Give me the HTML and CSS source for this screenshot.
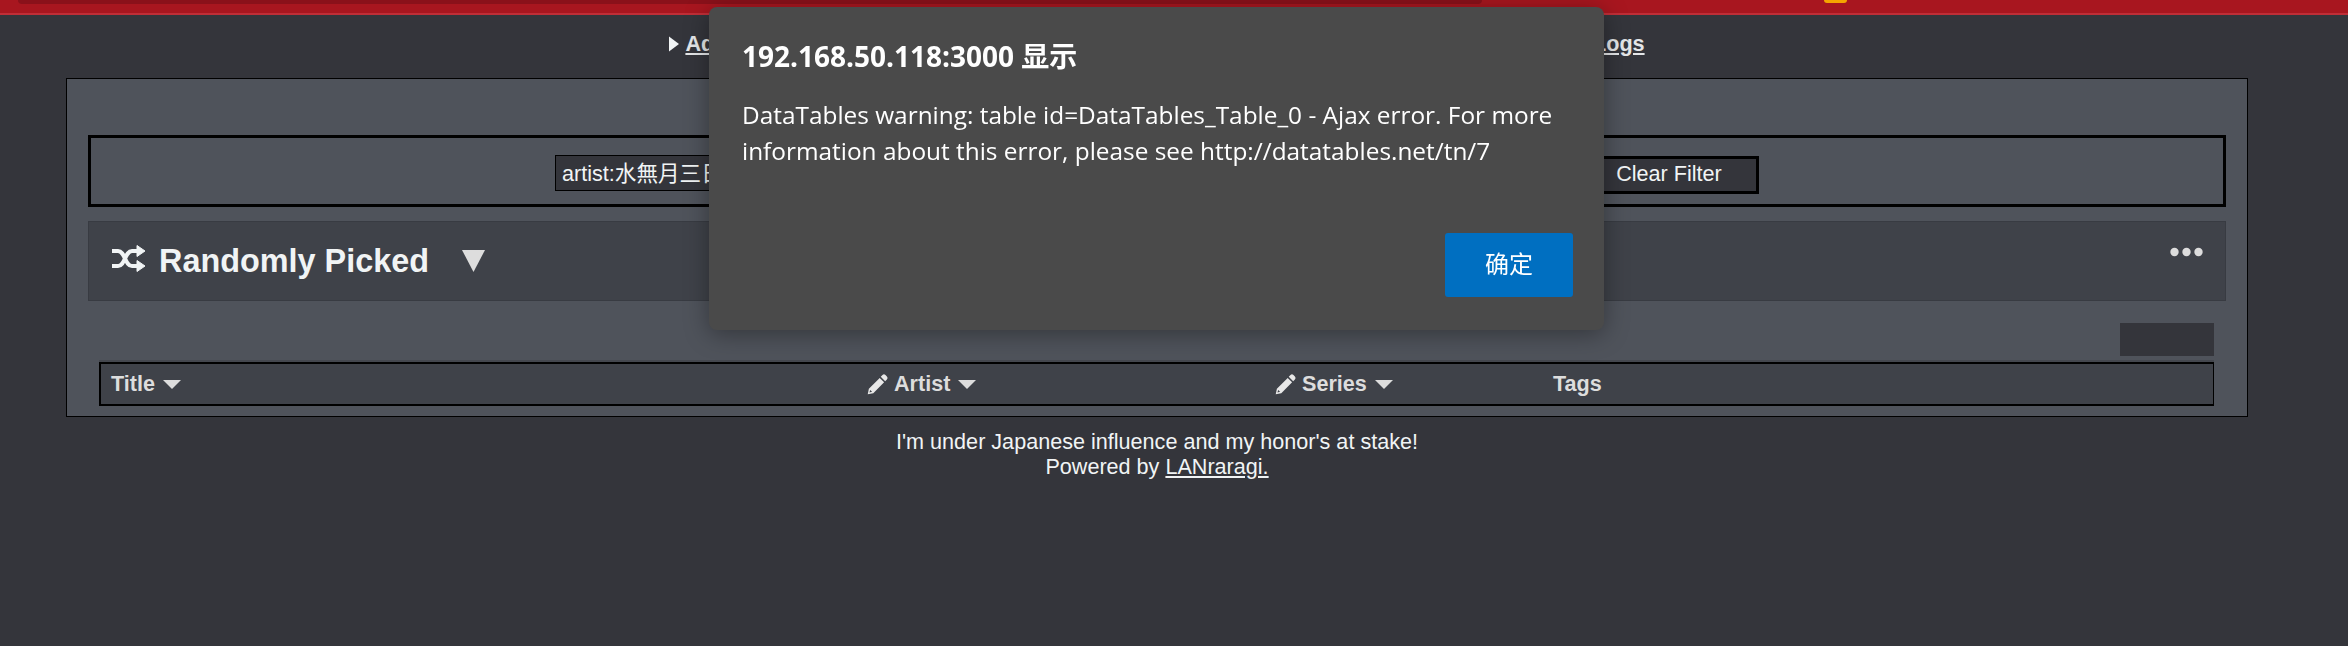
FILE: index.html
```html
<!DOCTYPE html>
<html lang="en">
<head>
<meta charset="utf-8">
<title>LANraragi</title>
<link rel="stylesheet" href="styles.css">
</head>
<body>
<div class="browser-strip"><span class="strip-tab"></span><span class="strip-dot"></span></div>
<div class="page">
  <nav class="nav">
    <svg class="nav-arrow" viewBox="0 0 10 16"><path d="M0 0.500 10 8 0 15.500Z"/></svg>
    <a href="#">Add Archives</a><a href="#">Batch Operations</a><a href="#">Settings</a><a href="#">Statistics</a><a href="#">Logs</a>
  </nav>
  <main class="panel">
    <div class="filter-box">
      <div class="search-input">artist:水無月三日</div>
      <button class="clear-btn">Clear Filter</button>
    </div>
    <section class="hero">
      <svg class="shuffle" viewBox="0 0 33 28"><path class="shuffle-line" d="M0 6H6C13 6 13 21 20 21H27"/><path class="shuffle-line" d="M0 21H6C13 21 13 6 20 6H27"/><path class="shuffle-head" d="M25 0.500 33 6 25 11.500Z"/><path class="shuffle-head" d="M25 15.500 33 21 25 26.500Z"/></svg>
      <h2 class="hero-title">Randomly Picked</h2>
      <svg class="hero-tri" viewBox="0 0 23 22"><path d="M0 0H23L11.500 22Z"/></svg>
      <svg class="dots" viewBox="0 0 33 10"><circle cx="4.500" cy="5" r="4.200"/><circle cx="16.500" cy="5" r="4.200"/><circle cx="28.500" cy="5" r="4.200"/></svg>
    </section>
    <div class="length-row"><span class="length-box"></span></div>
    <div class="thead">
      <div class="th"><span>Title</span><i class="caret"></i></div>
      <div class="th"><svg class="pencil" viewBox="0 0 24 24"><path fill-rule="evenodd" d="M17.200 2.200a2.200 2.200 0 0 1 3.100 0l1.500 1.500a2.200 2.200 0 0 1 0 3.100L20 8.600 15.400 4ZM14.300 5.100 18.900 9.700 7.600 21 1.800 22.200 3 16.400ZM4.400 17.700 3.600 20.400 6.300 19.600Z"/></svg><span>Artist</span><i class="caret"></i></div>
      <div class="th"><svg class="pencil" viewBox="0 0 24 24"><path fill-rule="evenodd" d="M17.200 2.200a2.200 2.200 0 0 1 3.100 0l1.500 1.500a2.200 2.200 0 0 1 0 3.100L20 8.600 15.400 4ZM14.300 5.100 18.900 9.700 7.600 21 1.800 22.200 3 16.400ZM4.400 17.700 3.600 20.400 6.300 19.600Z"/></svg><span>Series</span><i class="caret"></i></div>
      <div class="th"><span>Tags</span></div>
    </div>
  </main>
  <footer class="footer">
    <p>I'm under Japanese influence and my honor's at stake!</p>
    <p>Powered by <a href="#">LANraragi.</a></p>
  </footer>
</div>
<div class="dialog" role="alertdialog">
  <h1 class="dialog-title">192.168.50.118:3000 显示</h1>
  <p class="dialog-text">DataTables warning: table id=DataTables_Table_0 - Ajax error. For more information about this error, please see http://datatables.net/tn/7</p>
  <div class="dialog-actions"><button class="ok-btn">确定</button></div>
</div>
</body>
</html>
```

FILE: styles.css
```css
* { box-sizing: border-box; }
html, body { margin: 0; padding: 0; }
body {
  height: 646px;
  overflow: hidden;
  background: #34353b;
  color: #f1f4f5;
  font-family: "Liberation Sans", "Noto Sans CJK SC", sans-serif;
}
.browser-strip {
  position: relative;
  height: 15px;
  background: #a8161f;
  border-bottom: 2px solid #bf2e37;
}
.strip-tab {
  position: absolute;
  left: 18px;
  top: 0;
  width: 1464px;
  height: 4px;
  background: #8a111a;
  border-radius: 0 0 8px 8px;
}
.strip-dot {
  position: absolute;
  left: 1824px;
  top: 0;
  width: 23px;
  height: 3px;
  background: #f5a400;
  border-radius: 0 0 3px 3px;
}
.page { width: 2314px; }
.nav {
  display: flex;
  justify-content: center;
  align-items: center;
  gap: 102px;
  height: 63px;
  padding-bottom: 5px;
  font-size: 21.6px;
  font-weight: 700;
}
.nav a { color: #e4e6e8; text-decoration: underline; }
.nav-arrow { width: 10px; height: 16px; fill: #f1f4f5; margin-right: -96px; }
.panel {
  margin: 0 66px;
  height: 339px;
  padding: 56px 21px 0;
  background: #4f535b;
  border: 1px solid #000;
}
.filter-box {
  display: flex;
  justify-content: center;
  align-items: flex-start;
  gap: 6px;
  height: 72px;
  padding-top: 17px;
  border: 3px solid #000;
}
.search-input {
  width: 1018px;
  height: 36px;
  padding: 0 6px;
  background: #34353b;
  border: 1px solid #000;
  font-size: 21.6px;
  line-height: 36px;
  color: #f1f4f5;
}
.clear-btn {
  width: 180px;
  height: 38px;
  margin-top: 1px;
  padding: 0 0 2px;
  background: #34353b;
  border: 3px solid #000;
  color: #f1f4f5;
  font: 21.6px "Liberation Sans", sans-serif;
}
.hero {
  display: flex;
  align-items: center;
  height: 80px;
  margin-top: 14px;
  padding: 0 23px;
  background: #3f4249;
  border: 1px solid #383b42;
}
.shuffle { width: 33px; height: 28px; margin-bottom: 4px; }
.shuffle-line { fill: none; stroke: #f1f4f5; stroke-width: 4; }
.shuffle-head { fill: #f1f4f5; stroke: #f1f4f5; stroke-width: 1; stroke-linejoin: round; }
.hero-title {
  margin: 0 0 0 14px;
  font-size: 32.4px;
  font-weight: 700;
  color: #f1f4f5;
}
.hero-tri { width: 23px; height: 22px; margin-left: 33px; fill: #dddddd; }
.dots { width: 33px; height: 10px; margin: -18px -1px 0 auto; fill: #dddddd; }
.length-row {
  display: flex;
  justify-content: flex-end;
  padding: 22px 12px 0 0;
  height: 61px;
}
.length-box { width: 94px; height: 33px; background: #34353b; }
.thead {
  display: grid;
  grid-template-columns: 755px 408px 279px 1fr;
  align-items: center;
  height: 44px;
  margin: 0 12px 0 11px;
  padding-left: 10px;
  background: #3f4249;
  border-top: 2px solid #000;
  border-bottom: 2px solid #000;
  border-left: 2px solid #000;
  border-right: 1px solid #000;
  box-shadow: 0 -2px 0 #44474e;
  font-size: 21.6px;
  font-weight: 700;
  color: #dddddd;
}
.th { display: flex; align-items: center; }
.pencil { width: 23px; height: 23px; margin-right: 5px; fill: #e8e8e8; }
.caret {
  width: 0;
  height: 0;
  margin-left: 8px;
  border-left: 9px solid transparent;
  border-right: 9px solid transparent;
  border-top: 9px solid #dddddd;
}
.footer {
  margin-top: 12px;
  text-align: center;
  font-size: 21.6px;
  line-height: 25px;
  color: #f1f4f5;
}
.footer p { margin: 0; }
.footer a { color: #f1f4f5; text-decoration: underline; }
.dialog {
  position: fixed;
  left: 709px;
  top: 7px;
  width: 895px;
  height: 323px;
  padding: 31px 32px 0 33px;
  background: #4a4a4a;
  border-radius: 8px;
  box-shadow: 0 4px 24px rgba(0, 0, 0, 0.35);
  color: #fff;
  font-family: "Open Sans", "Noto Sans CJK SC", sans-serif;
}
.dialog-title {
  margin: 0;
  font-size: 28px;
  line-height: 36px;
  font-weight: 700;
}
.dialog-text {
  margin: 23px 0 0;
  font-size: 24.4px;
  line-height: 36px;
}
.dialog-actions {
  position: absolute;
  right: 31px;
  bottom: 33px;
}
.ok-btn {
  width: 128px;
  height: 64px;
  padding: 0 0 6px;
  background: #006fc1;
  border: 0;
  border-radius: 3px;
  color: #fff;
  font: 24px "Noto Sans CJK SC", sans-serif;
}
```
